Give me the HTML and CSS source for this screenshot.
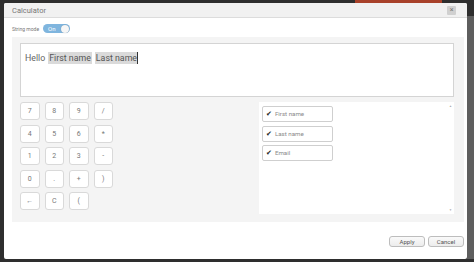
FILE: index.html
```html
<!DOCTYPE html>
<html>
<head>
<meta charset="utf-8">
<link rel="stylesheet" href="styles.css">
</head>
<body>
<div class="backdrop">
  <div class="bg-tab"></div>
  <div class="bg-scroll"></div>
  <div class="dialog">
    <div class="titlebar">
      <span class="title">Calculator</span>
      <span class="close">×</span>
    </div>
    <div class="body">
      <div class="mode-row">
        <span class="mode-label">String mode</span>
        <span class="toggle"><span class="toggle-text">On</span><span class="knob"></span></span>
      </div>
      <div class="panel">
        <div class="editor">
          <span class="word">Hello</span>
          <span class="chip">First name</span>
          <span class="chip">Last name</span><span class="caret"></span>
        </div>
        <div class="lower">
          <div class="keypad">
            <button class="key">7</button><button class="key">8</button><button class="key">9</button><button class="key">/</button>
            <button class="key">4</button><button class="key">5</button><button class="key">6</button><button class="key">*</button>
            <button class="key">1</button><button class="key">2</button><button class="key">3</button><button class="key">-</button>
            <button class="key">0</button><button class="key">.</button><button class="key">+</button><button class="key">)</button>
            <button class="key">←</button><button class="key">C</button><button class="key">(</button>
          </div>
          <div class="fields">
            <div class="field"><span class="check">✔</span>First name</div>
            <div class="field"><span class="check">✔</span>Last name</div>
            <div class="field"><span class="check">✔</span>Email</div>
            <span class="arrow arrow-up">▲</span>
            <span class="arrow arrow-down">▼</span>
          </div>
        </div>
      </div>
      <div class="footer">
        <button class="btn">Apply</button>
        <button class="btn">Cancel</button>
      </div>
    </div>
  </div>
</div>
</body>
</html>
```

FILE: styles.css
```css
* { box-sizing: border-box; }
html, body {
  margin: 0;
  padding: 0;
  width: 474px;
  height: 262px;
  overflow: hidden;
  background: #303030;
  font-family: Roboto, "Liberation Sans", sans-serif;
}
.backdrop {
  position: relative;
  width: 474px;
  height: 262px;
  padding: 3px 0 0 4px;
  background: #2e2e2e;
}
.bg-tab {
  position: absolute;
  left: 355px;
  top: 0;
  width: 87px;
  height: 3px;
  background: #a8412a;
}
.bg-scroll {
  position: absolute;
  right: 0;
  top: 16px;
  width: 7px;
  height: 243px;
  background: #5e5e5e;
}
.dialog {
  position: relative;
  width: 463px;
  height: 256px;
  background: #ffffff;
  border-radius: 2px;
  display: flex;
  flex-direction: column;
}
.titlebar {
  height: 15px;
  background: #f1f1f1;
  border-bottom: 1px solid #dcdcdc;
  display: flex;
  align-items: center;
  justify-content: space-between;
  padding: 0 11px 0 8px;
  border-radius: 2px 2px 0 0;
}
.title {
  font-size: 7.5px;
  color: #777;
}
.close {
  width: 9px;
  height: 9px;
  background: #d0d0d0;
  color: #777;
  font-size: 7px;
  line-height: 9px;
  text-align: center;
  border-radius: 1px;
}
.body {
  flex: 1;
  display: flex;
  flex-direction: column;
  padding: 0 3px 0 8px;
}
.mode-row {
  height: 19px;
  display: flex;
  align-items: center;
  gap: 4px;
  padding-top: 2px;
}
.mode-label {
  font-size: 5px;
  color: #777;
}
.toggle {
  width: 27px;
  height: 9px;
  border-radius: 5px;
  background: #7fb5de;
  display: flex;
  align-items: center;
  justify-content: space-between;
  padding: 0 1px 0 5px;
}
.toggle-text {
  font-size: 6px;
  color: #fff;
}
.knob {
  width: 8px;
  height: 8px;
  border-radius: 50%;
  background: #f6f6f6;
  box-shadow: 0 0 1px rgba(0,0,0,0.3);
}
.panel {
  height: 185px;
  background: #f4f4f4;
  padding: 6px 10px 8px 8px;
  display: flex;
  flex-direction: column;
  gap: 5px;
}
.editor {
  height: 54px;
  background: #fff;
  border: 1px solid #d4d4d4;
  padding: 8px 4px 0 4px;
  display: flex;
  align-items: flex-start;
  gap: 3px;
  font-size: 8.8px;
  color: #666;
}
.word {
  line-height: 12px;
}
.chip {
  line-height: 12px;
  background: #dadada;
  padding: 0 1px;
  color: #555;
}
.caret {
  width: 1px;
  height: 12px;
  background: #333;
  margin-left: -4px;
}
.lower {
  flex: 1;
  display: flex;
  justify-content: space-between;
}
.keypad {
  display: grid;
  grid-template-columns: repeat(4, 19.5px);
  grid-auto-rows: 18px;
  column-gap: 5px;
  row-gap: 4.5px;
  align-content: start;
}
.key {
  margin: 0;
  padding: 0;
  background: #fff;
  border: 1px solid #d9d9d9;
  border-radius: 3px;
  font-family: Roboto, "Liberation Sans", sans-serif;
  font-size: 7px;
  color: #777;
}
.fields {
  position: relative;
  width: 195px;
  background: #fff;
  padding: 4px 3px;
  display: flex;
  flex-direction: column;
  gap: 3.5px;
}
.field {
  width: 71px;
  height: 16px;
  border: 1px solid #cfcfcf;
  border-radius: 2px;
  display: flex;
  align-items: center;
  padding-left: 3px;
  font-size: 6.2px;
  color: #8a8a8a;
}
.check {
  color: #222;
  font-size: 7px;
  margin-right: 3px;
  font-family: "DejaVu Sans", sans-serif;
}
.arrow {
  position: absolute;
  right: 2px;
  font-size: 3px;
  color: #aaa;
}
.arrow-up { top: 2px; }
.arrow-down { bottom: 2px; }
.footer {
  flex: 1;
  display: flex;
  justify-content: flex-end;
  align-items: center;
  gap: 3px;
  padding-right: 0;
  padding-top: 2px;
}
.btn {
  margin: 0;
  padding: 0;
  width: 36px;
  height: 11px;
  border: 1px solid #bdbdbd;
  border-radius: 3px;
  background: linear-gradient(#fafafa, #ececec);
  font-family: Roboto, "Liberation Sans", sans-serif;
  font-size: 6px;
  color: #555;
}
```
